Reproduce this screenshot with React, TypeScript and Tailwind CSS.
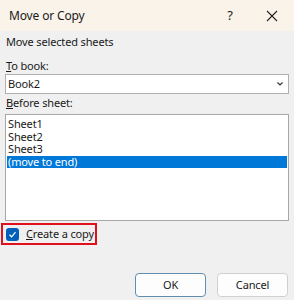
import React from "react";

export default function App() {
  return (
    <div className="w-[294px] h-[300px] bg-[#f0f0f0] flex flex-col overflow-hidden text-[11px] tracking-[-0.15px] text-[#1a1a1a]" style={{ fontFamily: '"Noto Sans", "Open Sans", sans-serif' }}>
      <div className="h-[31px] bg-[#f9f3ea] flex items-center pl-[9px] shrink-0">
        <span className="text-[12px] flex-1">Move or Copy</span>
        <span className="w-[20px] text-center text-[13px] mr-[26px]">?</span>
        <svg width="12" height="12" viewBox="0 0 12 12" className="mr-[16px]">
          <path d="M1 1 L11 11 M11 1 L1 11" stroke="#222" strokeWidth="1.1" />
        </svg>
      </div>
      <div className="px-[5px] flex flex-col">
        <div className="mt-[3px] h-[16px] leading-[16px] pl-[1px]">Move selected sheets</div>
        <div className="mt-[8px] h-[16px] leading-[16px] pl-[1px]"><span className="underline">T</span>o book:</div>
        <div className="h-[20px] bg-white border border-[#b0b0b0] flex items-center pl-[2px]">
          <span className="flex-1">Book2</span>
          <svg width="8" height="6" viewBox="0 0 8 6" className="mr-[4px]">
            <path d="M1.5 1.5 L4 4 L6.5 1.5" stroke="#333" strokeWidth="1.2" fill="none" />
          </svg>
        </div>
        <div className="mt-[1px] h-[16px] leading-[16px] pl-[1px]"><span className="underline">B</span>efore sheet:</div>
        <div className="mt-[3px] h-[107px] bg-white border border-[#a8a8a8] pt-[3px] px-[1px] flex flex-col">
          <div className="h-[12.5px] leading-[12.5px] pl-[1px]">Sheet1</div>
          <div className="h-[12.5px] leading-[12.5px] pl-[1px]">Sheet2</div>
          <div className="h-[12.5px] leading-[12.5px] pl-[1px]">Sheet3</div>
          <div className="h-[12.5px] leading-[12.5px] pl-[1px] bg-[#0078d7] text-white">(move to end)</div>
        </div>
      </div>
      <div className="mt-[2px] ml-[1px] w-[96px] h-[22px] border-[2px] border-[#e0101c] flex items-center pl-[3px] gap-[7px] whitespace-nowrap">
        <div className="w-[13px] h-[13px] rounded-[3px] bg-[#005fb8] flex items-center justify-center shrink-0">
          <svg width="9" height="9" viewBox="0 0 9 9">
            <path d="M1.5 4.8 L3.6 6.8 L7.5 2.2" stroke="white" strokeWidth="1.2" fill="none" />
          </svg>
        </div>
        <span><span className="underline">C</span>reate a copy</span>
      </div>
      <div className="flex justify-end gap-[11px] pr-[6px] mt-[28px]">
        <button className="w-[71px] h-[24px] bg-[#fdfdfd] border border-[#5f8fb0] rounded-[4px] text-[11px]">OK</button>
        <button className="w-[71px] h-[24px] bg-[#fdfdfd] border border-[#d0d0d0] rounded-[4px] text-[11px]">Cancel</button>
      </div>
    </div>
  );
}
